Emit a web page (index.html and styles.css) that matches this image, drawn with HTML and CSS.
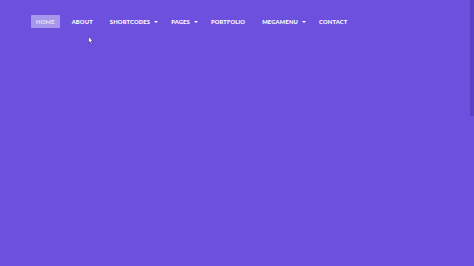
FILE: index.html
```html
<!DOCTYPE html>
<html>
<head>
<meta charset="utf-8">
<link rel="stylesheet" href="styles.css">
</head>
<body>
<div class="page">
  <nav class="menu">
    <a class="item active">HOME</a>
    <a class="item">ABOUT</a>
    <a class="item">SHORTCODES<span class="caret"></span></a>
    <a class="item">PAGES<span class="caret"></span></a>
    <a class="item">PORTFOLIO</a>
    <a class="item">MEGAMENU<span class="caret"></span></a>
    <a class="item">CONTACT</a>
  </nav>
  <div class="scrollbar"></div>
  <svg class="cursor" width="6" height="9" viewBox="0 0 6 9"><path d="M0.5 0.5 L0.5 7 L2 5.6 L3.2 8.3 L4.2 7.8 L3 5.2 L5 5.2 Z" fill="#fff" stroke="#3a2a80" stroke-width="0.6"/></svg>
</div>
</body>
</html>
```
FILE: styles.css
```css
html, body {
  margin: 0;
  padding: 0;
}
body {
  background: #6d50de;
  font-family: "Lato", "Open Sans", sans-serif;
}
.page {
  position: relative;
  width: 474px;
  height: 266px;
  overflow: hidden;
}
.menu {
  display: flex;
  align-items: center;
  padding: 15px 0 0 31px;
  gap: 7px;
}
.item {
  display: flex;
  align-items: center;
  height: 13px;
  padding: 0 5px;
  color: #ffffff;
  font-size: 5.8px;
  font-weight: 900;
  letter-spacing: 0.15px;
  white-space: nowrap;
}
.item.active {
  background: #a797ec;
  color: #e4e0f6;
  border-radius: 1px;
}
.caret {
  width: 0;
  height: 0;
  margin-left: 4px;
  margin-right: -4px;
  border-left: 2px solid transparent;
  border-right: 2px solid transparent;
  border-top: 2.5px solid #ffffff;
}
.scrollbar {
  position: absolute;
  top: 0;
  right: 0;
  width: 4px;
  height: 116px;
  background: #5b40c4;
}
.cursor {
  position: absolute;
  left: 88px;
  top: 36px;
}
```
